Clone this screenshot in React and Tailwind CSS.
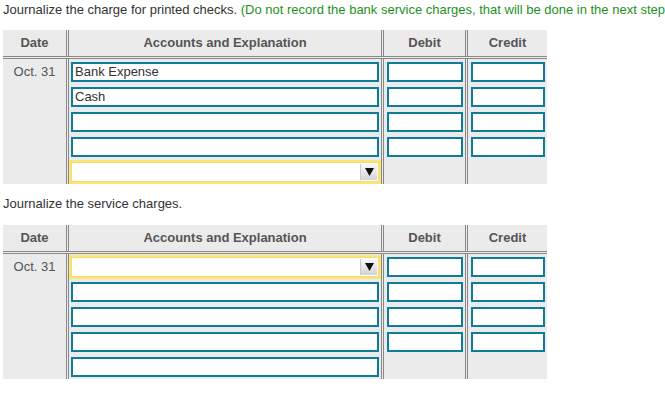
const rows1 = [
  { account: 'Bank Expense', debit: true },
  { account: 'Cash', debit: true },
  { account: '', debit: true },
  { account: '', debit: true },
  { select: true, debit: false },
];

const rows2 = [
  { select: true, debit: true },
  { account: '', debit: true },
  { account: '', debit: true },
  { account: '', debit: true },
  { account: '', debit: false },
];

function TextBox({ value }) {
  return (
    <div className="h-[20px] border-2 border-[#0f7d9a] bg-white pl-[2px] text-[13px] leading-[16px] text-[#333]">
      {value}
    </div>
  );
}

function SelectBox() {
  return (
    <div className="relative h-[20px] border border-[#f3dc78] bg-white ring-2 ring-[#fde574]">
      <div className="absolute right-[1px] top-[1px] bottom-[1px] w-[17px] flex items-center justify-center bg-gradient-to-b from-[#fafafa] to-[#d4d4d4] border-l border-[#c8c8c8]">
        <svg width="9" height="8" viewBox="0 0 9 8">
          <polygon points="0,0 9,0 4.5,8" fill="#111" />
        </svg>
      </div>
    </div>
  );
}

function Journal({ rows }) {
  const divider = 'border-r-[3px] border-double border-[#888]';
  return (
    <div className="ml-[3px] w-[544px] bg-[#ebebeb] text-[13px] text-[#555]">
      <div className="flex h-[29px] border-b-[3px] border-double border-[#888] font-bold">
        <div className={`w-[66px] flex items-center justify-center ${divider}`}>Date</div>
        <div className={`w-[315px] flex items-center justify-center ${divider}`}>Accounts and Explanation</div>
        <div className={`w-[84px] flex items-center justify-center ${divider}`}>Debit</div>
        <div className="flex-1 flex items-center justify-center">Credit</div>
      </div>
      <div className="flex">
        <div className={`w-[66px] pt-[3px] ${divider}`}>
          <div className="h-[20px] flex items-center justify-center">Oct. 31</div>
        </div>
        <div className={`w-[315px] px-[2px] pt-[3px] pb-[2px] flex flex-col gap-[5px] ${divider}`}>
          {rows.map((r, i) =>
            r.select ? <SelectBox key={i} /> : <TextBox key={i} value={r.account} />
          )}
        </div>
        <div className={`w-[84px] pl-[3px] pr-[2px] pt-[3px] flex flex-col gap-[5px] ${divider}`}>
          {rows.filter((r) => r.debit).map((r, i) => (
            <TextBox key={i} value="" />
          ))}
        </div>
        <div className="flex-1 pl-[3px] pr-[2px] pt-[3px] flex flex-col gap-[5px]">
          {rows.filter((r) => r.debit).map((r, i) => (
            <TextBox key={i} value="" />
          ))}
        </div>
      </div>
    </div>
  );
}

export default function App() {
  return (
    <div className="w-[665px] h-[402px] overflow-hidden bg-white font-['Liberation_Sans',Arial,sans-serif]">
      <div className="h-[20px] pl-[3px] text-[13px] leading-[20px] text-[#333] whitespace-nowrap">
        Journalize the charge for printed checks.{' '}
        <span className="text-[#1f8f1f]">
          (Do not record the bank service charges, that will be done in the next step
        </span>
      </div>
      <div className="mt-[10px]">
        <Journal rows={rows1} />
      </div>
      <div className="mt-[10px] mb-[11px] h-[20px] pl-[3px] text-[13px] leading-[20px] text-[#333]">
        Journalize the service charges.
      </div>
      <Journal rows={rows2} />
    </div>
  );
}
